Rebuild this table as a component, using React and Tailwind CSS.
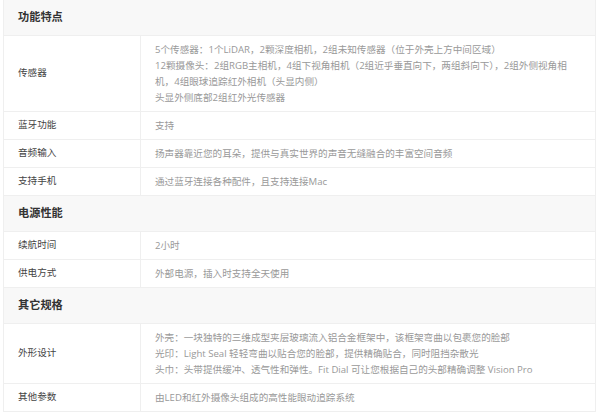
import React from "react";

const sections = [
  {
    title: "功能特点",
    rows: [
      {
        label: "传感器",
        lines: [
          "5个传感器：1个LiDAR，2颗深度相机，2组未知传感器（位于外壳上方中间区域）",
          "12颗摄像头：2组RGB主相机，4组下视角相机（2组近乎垂直向下，两组斜向下），2组外侧视角相",
          "机，4组眼球追踪红外相机（头显内侧）",
          "头显外侧底部2组红外光传感器",
        ],
      },
      { label: "蓝牙功能", lines: ["支持"] },
      { label: "音频输入", lines: ["扬声器靠近您的耳朵，提供与真实世界的声音无缝融合的丰富空间音频"] },
      { label: "支持手机", lines: ["通过蓝牙连接各种配件，且支持连接Mac"] },
    ],
  },
  {
    title: "电源性能",
    rows: [
      { label: "续航时间", lines: ["2小时"] },
      { label: "供电方式", lines: ["外部电源，插入时支持全天使用"] },
    ],
  },
  {
    title: "其它规格",
    rows: [
      {
        label: "外形设计",
        lines: [
          "外壳：一块独特的三维成型夹层玻璃流入铝合金框架中，该框架弯曲以包裹您的脸部",
          "光印：Light Seal 轻轻弯曲以贴合您的脸部，提供精确贴合，同时阻挡杂散光",
          "头巾：头带提供缓冲、透气性和弹性。Fit Dial 可让您根据自己的头部精确调整 Vision Pro",
        ],
      },
      { label: "其他参数", lines: ["由LED和红外摄像头组成的高性能眼动追踪系统"] },
    ],
  },
];

export default function App() {
  return (
    <div
      className="w-[600px] h-[412px] bg-white overflow-hidden"
      style={{ fontFamily: '"Open Sans", "Noto Sans CJK SC", sans-serif' }}
    >
      <div className="ml-[3px] w-[593px] border-x border-[#efefef]">
        {sections.map((s) => (
          <div key={s.title}>
            <div className="h-[36px] bg-[#f8f8f8] border-b border-[#efefef] flex items-center pl-[14px] text-[11.2px] font-bold text-[#333]">
              {s.title}
            </div>
            {s.rows.map((r) => (
              <div key={r.label} className="grid grid-cols-[137px_1fr] border-b border-[#efefef]">
                <div className="flex items-center pl-[14px] text-[9.6px] text-[#444] border-r border-[#efefef]">
                  {r.label}
                </div>
                <div className="pl-[14px] pr-[10px] py-[5.5px] text-[9.6px] leading-[16px] text-[#999]">
                  {r.lines.map((l, i) => (
                    <div key={i} className="whitespace-nowrap">{l}</div>
                  ))}
                </div>
              </div>
            ))}
          </div>
        ))}
      </div>
    </div>
  );
}
